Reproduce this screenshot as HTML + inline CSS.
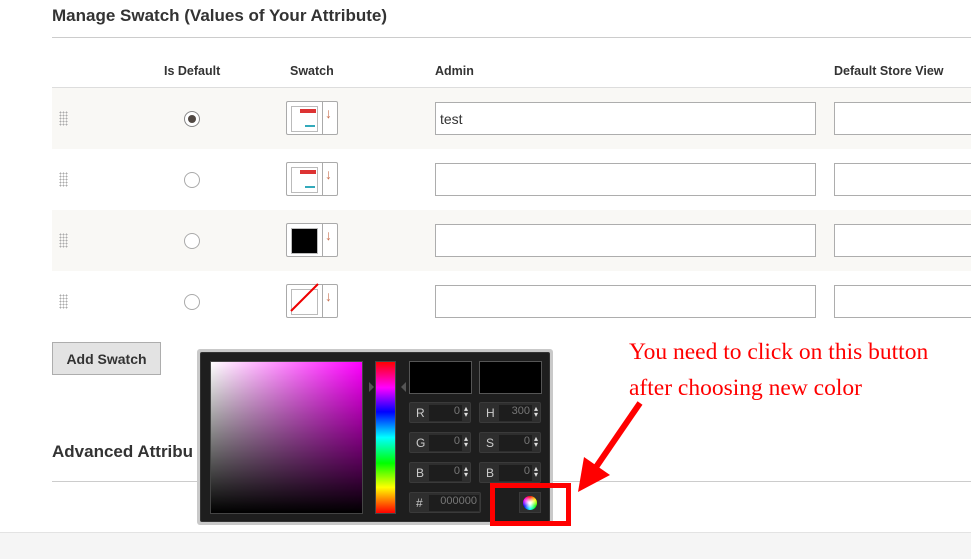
<!DOCTYPE html>
<html><head><style>
*{margin:0;padding:0;box-sizing:border-box}
body{width:971px;height:559px;background:#fff;font-family:"Liberation Sans",sans-serif;position:relative;overflow:hidden;color:#333}
.a{position:absolute}
.row{position:absolute;left:52px;width:919px;height:61px}
.grip{position:absolute;left:7px;top:23px;width:9px;height:15px;background-image:radial-gradient(#aaa 45%,transparent 50%);background-size:3px 3px}
.rad{position:absolute;left:132px;top:23px;width:16px;height:16px;border:1px solid #aaa;border-radius:50%;background:#fff}
.sw{position:absolute;left:234px;top:13px;width:52px;height:34px;border:1px solid #aaa;border-radius:2px;background:#fff}
.sw .in{position:absolute;left:4px;top:4px;width:27px;height:26px;border:1px solid #bbb}
.sw .d{position:absolute;left:35px;top:0;width:1px;height:32px;background:#aaa}
.sw .ar{position:absolute;left:38px;top:3px;font-size:14px;color:#c87050}
.inp{position:absolute;top:14px;height:33px;border:1px solid #adadad;background:#fff;font-size:14px;padding:8px 4px}
.fld{position:absolute;width:62px;height:21px;background:#2e2e2e;border:1px solid #3a3a3a;border-radius:2px;color:#ccc;font-size:12px}
.fld b{position:absolute;left:6px;top:3px;font-weight:normal}
.fld i{position:absolute;left:19px;top:2px;width:33px;height:16px;background:#1d1d1d;font-style:normal;color:#777;text-align:right;font-size:11px;padding-right:2px}
.fld s{position:absolute;right:2px;top:3px;text-decoration:none;font-size:8px;color:#ddd;line-height:6px}
.h{position:absolute;top:64px;font-size:12.5px;font-weight:bold;color:#333}
</style></head><body>
<div class="a" style="left:52px;top:6px;font-size:17px;font-weight:bold;color:#333">Manage Swatch (Values of Your Attribute)</div>
<div class="a" style="left:52px;top:37px;width:919px;height:1px;background:#ccc"></div>
<div class="h" style="left:164px">Is Default</div>
<div class="h" style="left:290px">Swatch</div>
<div class="h" style="left:435px">Admin</div>
<div class="h" style="left:834px">Default Store View</div>
<div class="a" style="left:52px;top:87px;width:919px;height:1px;background:#ddd"></div>

<div class="row" style="top:88px;background:#f9f8f5"><div class="grip"></div><div class="rad" style="border-color:#888"><div style="position:absolute;left:3px;top:3px;width:8px;height:8px;border-radius:50%;background:#514943"></div></div>
<div class="sw"><div class="in"><div style="position:absolute;left:8px;top:2px;width:16px;height:4px;background:#d33"></div><div style="position:absolute;left:13px;top:18px;width:10px;height:2px;background:#3ab"></div></div><div class="d"></div><div class="ar">↓</div></div>
<div class="inp" style="left:383px;width:381px">test</div><div class="inp" style="left:782px;width:140px"></div></div>

<div class="row" style="top:149px"><div class="grip"></div><div class="rad"></div>
<div class="sw"><div class="in"><div style="position:absolute;left:8px;top:2px;width:16px;height:4px;background:#d33"></div><div style="position:absolute;left:13px;top:18px;width:10px;height:2px;background:#3ab"></div></div><div class="d"></div><div class="ar">↓</div></div>
<div class="inp" style="left:383px;width:381px"></div><div class="inp" style="left:782px;width:140px"></div></div>

<div class="row" style="top:210px;background:#f9f8f5"><div class="grip"></div><div class="rad"></div>
<div class="sw"><div class="in" style="background:#000"></div><div class="d"></div><div class="ar">↓</div></div>
<div class="inp" style="left:383px;width:381px"></div><div class="inp" style="left:782px;width:140px"></div></div>

<div class="row" style="top:271px"><div class="grip"></div><div class="rad"></div>
<div class="sw"><div class="in"></div><svg class="a" style="left:2px;top:-4px" width="32" height="32"><line x1="2" y1="30" x2="29" y2="3" stroke="#e00" stroke-width="2"/></svg><div class="d"></div><div class="ar">↓</div></div>
<div class="inp" style="left:383px;width:381px"></div><div class="inp" style="left:782px;width:140px"></div></div>

<div class="a" style="left:52px;top:342px;width:109px;height:33px;background:#e3e3e3;border:1px solid #adadad;font-size:14px;font-weight:bold;padding:8px 0;text-align:center;white-space:nowrap;color:#333">Add Swatch</div>
<div class="a" style="left:52px;top:442px;font-size:17px;font-weight:bold">Advanced Attribu</div>
<div class="a" style="left:52px;top:481px;width:919px;height:1px;background:#ccc"></div>
<div class="a" style="left:0;top:532px;width:971px;height:27px;background:#f5f5f5;border-top:1px solid #e3e3e3"></div>

<div class="a" style="left:197px;top:349px;width:356px;height:176px;background:#c9c9c9;border-radius:3px;padding:3px">
<div style="position:relative;width:100%;height:100%;background:#1e1e1e;border-radius:2px;border:1px solid #333">
<div class="a" style="left:9px;top:8px;width:153px;height:153px;border:1px solid #444;background:linear-gradient(to top,#000,rgba(0,0,0,0)),linear-gradient(to right,#fff,#f0f)"></div>
<div class="a" style="left:174px;top:8px;width:21px;height:153px;border:1px solid #444;background:linear-gradient(to bottom,#f00,#f0f 17%,#00f 33%,#0ff 50%,#0f0 67%,#ff0 83%,#f00)"></div>
<div class="a" style="left:168px;top:29px;width:0;height:0;border:5px solid transparent;border-left-color:#555"></div>
<div class="a" style="left:195px;top:29px;width:0;height:0;border:5px solid transparent;border-right-color:#555"></div>
<div class="a" style="left:208px;top:8px;width:63px;height:33px;background:#000;border:1px solid #555"></div>
<div class="a" style="left:278px;top:8px;width:63px;height:33px;background:#000;border:1px solid #555"></div>
<div class="fld" style="left:208px;top:49px"><b>R</b><i>0</i><s>▴<br>▾</s></div>
<div class="fld" style="left:278px;top:49px"><b>H</b><i>300</i><s>▴<br>▾</s></div>
<div class="fld" style="left:208px;top:79px"><b>G</b><i>0</i><s>▴<br>▾</s></div>
<div class="fld" style="left:278px;top:79px"><b>S</b><i>0</i><s>▴<br>▾</s></div>
<div class="fld" style="left:208px;top:109px"><b>B</b><i>0</i><s>▴<br>▾</s></div>
<div class="fld" style="left:278px;top:109px"><b>B</b><i>0</i><s>▴<br>▾</s></div>
<div class="fld" style="left:208px;top:139px;width:72px"><b>#</b><i style="width:50px;text-align:right">000000</i></div>
<div class="a" style="left:318px;top:139px;width:22px;height:21px;background:#2e2e2e;border:1px solid #3a3a3a"><div style="position:absolute;left:3px;top:3px;width:14px;height:14px;border-radius:50%;background:radial-gradient(circle,#fff 10%,transparent 70%),conic-gradient(#f00,#ff0,#0f0,#0ff,#00f,#f0f,#f00)"></div></div>
</div></div>

<div class="a" style="left:490px;top:483px;width:81px;height:43px;border:5px solid #f00"></div>
<svg class="a" style="left:570px;top:395px" width="80" height="105"><line x1="70" y1="8" x2="22" y2="78" stroke="#f00" stroke-width="6"/><polygon points="8,97 14,62 40,80" fill="#f00"/></svg>
<div class="a" style="left:629px;top:334px;font-family:'Liberation Serif',serif;font-size:23.5px;color:#f00;line-height:36px;white-space:nowrap">You need to click on this button<br>after choosing new color</div>
</body></html>
